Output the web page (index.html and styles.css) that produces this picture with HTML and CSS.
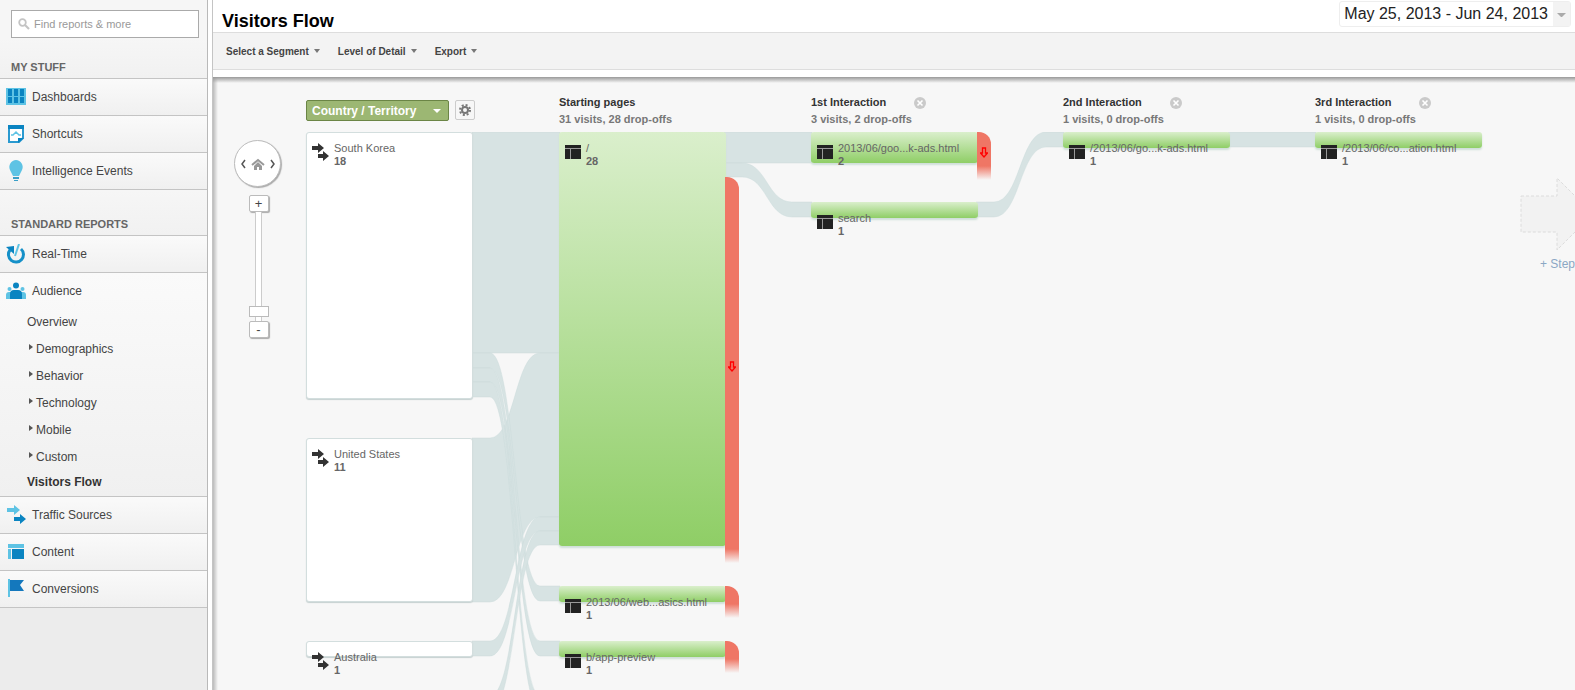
FILE: index.html
```
<!DOCTYPE html>
<html lang="en">
<head>
    <meta charset="utf-8">
    <title>Visitors Flow</title>
    <link rel="stylesheet" href="styles.css">
</head>
<body>
    <!-- shared icons -->
    <svg class="sprite" aria-hidden="true">
        <symbol id="page" viewBox="0 0 16 14">
            <path fill="#999" d="M0 0h16v14H0z"/>
            <path d="M0 0h16v3H0zM0 4h5v10H0zM6 4h10v10H6z"/>
        </symbol>
        <symbol id="arrows" viewBox="0 0 18 18">
            <path d="M0 3h6V0l6 5-6 5V7H0zM6 11h5V8l6 5-6 5v-3H6z"/>
        </symbol>
        <symbol id="close" viewBox="0 0 12 12">
            <circle cx="6" cy="6" r="6" fill="#cacaca"/>
            <path d="M3.5 3.5l5 5M8.5 3.5l-5 5" stroke="#fff" stroke-width="1.6"/>
        </symbol>
        <symbol id="drop" viewBox="0 0 8 11">
            <path d="M2.5 1h3v5h2L4 10 .5 6h2z" fill="none" stroke="#f00" stroke-width="1.3"/>
        </symbol>
    </svg>

    <div class="app">
        <nav class="sidebar">
            <div class="search">
                <svg width="12" height="12" viewBox="0 0 12 12"><circle cx="4.500" cy="4.500" r="3.300" fill="none" stroke="#c4c4c4" stroke-width="1.800"/><path d="M7 7l4 4" stroke="#c4c4c4" stroke-width="2.200"/></svg>
                <input type="text" aria-label="Find reports" placeholder="Find reports &amp; more">
            </div>

            <h2 class="section">MY STUFF</h2>
            <a class="item" href="#">
                <svg width="20" height="20" viewBox="0 0 20 20"><path fill="#5ec3e4" d="M0 1h20v17H0z"/><path fill="#0a84c1" d="M2 2h4v7H2zM8 2h4v7H8zM14 2h4v7h-4zM2 10h4v6H2zM8 10h4v6H8zM14 10h4v6h-4z"/></svg>
                Dashboards
            </a>
            <a class="item" href="#">
                <svg width="20" height="20" viewBox="0 0 20 20"><path fill="#fff" stroke="#2a9ad0" stroke-width="2" d="M3 3h14v11l-4 4H3z"/><path fill="#0a84c1" d="M2 1h16v4H2zM12 19v-5h6z"/><path fill="none" stroke="#5ec3e4" stroke-width="1.500" d="M5 11h2l3-3 3 3h2"/></svg>
                Shortcuts
            </a>
            <a class="item" href="#">
                <svg width="20" height="22" viewBox="0 0 20 22"><path fill="#5ec3e4" d="M10 0a7 7 0 0 1 6 10l-3 6H7l-3-6a7 7 0 0 1 6-10z"/><path fill="#3a9fc8" d="M7 17h6v2H7zM8 20h4v1H8z"/></svg>
                Intelligence Events
            </a>

            <h2 class="section standard">STANDARD REPORTS</h2>
            <a class="item" href="#">
                <svg width="20" height="20" viewBox="0 0 20 20"><path fill="none" stroke="#1590c8" stroke-width="3" d="M15 5a7.500 7.500 0 1 1-11 1"/><path fill="#0a84c1" d="M0 3l8-1v8z"/><path stroke="#5ec3e4" stroke-width="2" d="M9 12l4-12"/></svg>
                Real-Time
            </a>
            <div class="group">
                <a class="item" href="#">
                    <svg width="20" height="20" viewBox="0 0 20 20"><g fill="#5ec3e4"><circle cx="3.500" cy="8" r="2"/><circle cx="16.500" cy="8" r="2"/><path d="M0 18v-4q0-3 3-3h14q3 0 3 3v4z"/></g><g fill="#0a84c1"><circle cx="10" cy="4.500" r="3"/><path d="M4 18v-5q0-4 4-4h4q4 0 4 4v5z"/></g></svg>
                    Audience
                </a>
                <ul>
                    <li><a href="#">Overview</a></li>
                    <li class="closed"><a href="#">Demographics</a></li>
                    <li class="closed"><a href="#">Behavior</a></li>
                    <li class="closed"><a href="#">Technology</a></li>
                    <li class="closed"><a href="#">Mobile</a></li>
                    <li class="closed"><a href="#">Custom</a></li>
                    <li class="current"><a href="#">Visitors Flow</a></li>
                </ul>
            </div>
            <a class="item" href="#">
                <svg width="20" height="20" viewBox="0 0 20 20"><path fill="#5ec3e4" d="M1 3h7V0l6 5-6 5V7H1z"/><path fill="#0a84c1" d="M8 12h6V9l6 5-6 5v-3H8z"/></svg>
                Traffic Sources
            </a>
            <a class="item" href="#">
                <svg width="20" height="20" viewBox="0 0 20 20"><path fill="#5ec3e4" d="M2 2h16v4H2zM2 7h3v10H2z"/><path fill="#0a84c1" d="M6 7h12v10H6z"/></svg>
                Content
            </a>
            <a class="item" href="#">
                <svg width="20" height="20" viewBox="0 0 20 20"><path fill="#5ec3e4" d="M2 0h2v18H2z"/><path fill="#1478bd" d="M4 1h14l-4 5 4 6H4z"/></svg>
                Conversions
            </a>
        </nav>

        <main class="report">
            <header class="title-bar">
                <h1>Visitors Flow</h1>
                <button class="date"><span>May 25, 2013 - Jun 24, 2013</span><i></i></button>
            </header>
            <div class="toolbar">
                <button>Select a Segment</button>
                <button>Level of Detail</button>
                <button>Export</button>
            </div>

            <section class="canvas">
                <div class="controls">
                    <div class="pan">
                        <button aria-label="Back"><svg width="6" height="10" viewBox="0 0 6 10"><path d="M5 1L2 5l3 4" fill="none" stroke="#555" stroke-width="1.500"/></svg></button>
                        <button aria-label="Home"><svg width="14" height="12" viewBox="0 0 14 12"><path d="M1 7l6-5 6 5" fill="none" stroke="#999" stroke-width="2"/><path d="M3 8l4-4 4 4v4H8V9H6v3H3z" fill="#999"/></svg></button>
                        <button aria-label="Forward"><svg width="6" height="10" viewBox="0 0 6 10"><path d="M1 1l3 4-3 4" fill="none" stroke="#555" stroke-width="1.500"/></svg></button>
                    </div>
                    <button class="zoom">+</button>
                    <input type="range" aria-label="Zoom" min="0" max="100" value="4">
                    <button class="zoom">-</button>
                </div>

                <div class="flow">
                    <div class="steps">
                        <div class="step dimension">
                            <label class="picker">
                                <select aria-label="Dimension"><option>Country / Territory</option></select>
                            </label>
                            <button class="gear" aria-label="Settings">
                                <svg width="12" height="12" viewBox="0 0 12 12"><circle cx="6" cy="6" r="3" fill="none" stroke="#777" stroke-width="2"/><circle cx="6" cy="6" r="5" fill="none" stroke="#777" stroke-width="2" stroke-dasharray="2 1.927"/></svg>
                            </button>
                        </div>
                        <div class="step">
                            <h3>Starting pages</h3>
                            <p>31 visits, 28 drop-offs</p>
                        </div>
                        <div class="step">
                            <h3>1st Interaction <button aria-label="Remove step"><svg width="12" height="12"><use href="#close"/></svg></button></h3>
                            <p>3 visits, 2 drop-offs</p>
                        </div>
                        <div class="step">
                            <h3>2nd Interaction <button aria-label="Remove step"><svg width="12" height="12"><use href="#close"/></svg></button></h3>
                            <p>1 visits, 0 drop-offs</p>
                        </div>
                        <div class="step">
                            <h3>3rd Interaction <button aria-label="Remove step"><svg width="12" height="12"><use href="#close"/></svg></button></h3>
                            <p>1 visits, 0 drop-offs</p>
                        </div>
                    </div>

                    <div class="diagram">
                        <svg class="links" width="1200" height="640">
                            <path d="M166 0H254V221H166z"/>
                            <path d="M166 306H184C209 306 209 221 234 221H254V385H234C209 385 209 470 184 470H166z"/>
                            <path d="M166 221H184C209 221 209 454 234 454H254V469H234C209 469 209 236 184 236H166z"/>
                            <path d="M166 236H184C209 236 209 509 234 509H254V524H234C209 524 209 250 184 250H166z"/>
                            <path d="M166 250H184C209 250 209 564 234 564H254V579H234C209 579 209 265 184 265H166z"/>
                            <path d="M166 509H184C209 509 209 385 234 385H254V399H234C209 399 209 524 184 524H166z"/>
                            <path d="M166 564H184C209 564 209 399 234 399H254V413H234C209 413 209 579 184 579H166z"/>
                            <path d="M418 0H506V31H418z"/>
                            <path d="M418 31H436C461 31 461 70 486 70H506V85H486C461 85 461 45 436 45H418z"/>
                            <path d="M670 70H688C714 70 714 0 740 0H758V15H740C714 15 714 85 688 85H670z"/>
                            <path d="M922 0H1010V15H922z"/>
                        </svg>

                        <div class="node source korea"><svg width="18" height="18"><use href="#arrows"/></svg><p>South Korea <b>18</b></p></div>
                        <div class="node source states"><svg width="18" height="18"><use href="#arrows"/></svg><p>United States <b>11</b></p></div>
                        <div class="node source australia"><svg width="18" height="18"><use href="#arrows"/></svg><p>Australia <b>1</b></p></div>

                        <div class="node start root"><svg width="16" height="14"><use href="#page"/></svg><p>/ <b>28</b></p></div>
                        <div class="node start basics"><svg width="16" height="14"><use href="#page"/></svg><p>2013/06/web...asics.html <b>1</b></p></div>
                        <div class="node start preview"><svg width="16" height="14"><use href="#page"/></svg><p>b/app-preview <b>1</b></p></div>

                        <div class="node first ads"><svg width="16" height="14"><use href="#page"/></svg><p>2013/06/goo...k-ads.html <b>2</b></p></div>
                        <div class="node first find"><svg width="16" height="14"><use href="#page"/></svg><p>search <b>1</b></p></div>
                        <div class="node second"><svg width="16" height="14"><use href="#page"/></svg><p>/2013/06/go...k-ads.html <b>1</b></p></div>
                        <div class="node third"><svg width="16" height="14"><use href="#page"/></svg><p>/2013/06/co...ation.html <b>1</b></p></div>

                        <div class="drop drop-root"><svg width="8" height="11"><use href="#drop"/></svg></div>
                        <div class="drop drop-basics"></div>
                        <div class="drop drop-preview"></div>
                        <div class="drop drop-ads"><svg width="8" height="11"><use href="#drop"/></svg></div>
                    </div>
                </div>

                <a class="add-step" href="#">
                    <svg width="76" height="74" viewBox="0 0 76 74"><path d="M1 19h36V1l36 36-36 36V55H1z" fill="#f2f2f2" stroke="#dcdcdc" stroke-dasharray="3 2"/></svg>
                    <span>+ Step</span>
                </a>
            </section>
        </main>
    </div>
</body>
</html>
```

FILE: styles.css
```
* {
    margin: 0;
    padding: 0;
    box-sizing: border-box;
}

body {
    font-family: "Liberation Sans", Arial, sans-serif;
    font-size: 12px;
    color: #444;
    background: #fff;
}

button {
    border: none;
    background: none;
    font-family: inherit;
    color: inherit;
    cursor: pointer;
}

a {
    color: inherit;
    text-decoration: none;
}

svg {
    display: block;
    flex: none;
}

.sprite {
    position: absolute;
    width: 0;
    height: 0;
}

.app {
    display: flex;
    height: 100vh;
    overflow: hidden;
}

/* sidebar */
.sidebar {
    width: 208px;
    flex: none;
    background: #ececec;
    border-right: 1px solid #b9b9b9;
}

.search {
    display: flex;
    align-items: center;
    padding: 10px 8px 0 11px;
    height: 38px;
    background: #f6f6f6;
}

.search svg {
    position: absolute;
    left: 18px;
}

.search input {
    width: 100%;
    height: 28px;
    padding-left: 22px;
    border: 1px solid #aaa;
    background: #fff;
    font-family: inherit;
    font-size: 11px;
}

.search input::placeholder {
    color: #999;
}

.section {
    height: 40px;
    padding: 20px 0 0 11px;
    font-size: 11px;
    line-height: 18px;
    color: #666;
    background: linear-gradient(#f6f6f6, #f1f1f1);
}

.standard {
    height: 46px;
    padding-top: 25px;
    border-top: 1px solid #c4c4c4;
}

.item {
    display: flex;
    align-items: center;
    gap: 6px;
    height: 37px;
    padding-left: 6px;
    border-top: 1px solid #c4c4c4;
    background: linear-gradient(#fafafa, #f0f0f0);
}

.sidebar > .item:last-child {
    height: 38px;
    border-bottom: 1px solid #c4c4c4;
}

.group {
    border-top: 1px solid #c4c4c4;
    background: linear-gradient(#fafafa, #f0f0f0);
}

.group .item {
    height: 36px;
    border: none;
    background: none;
}

.group ul {
    list-style: none;
    padding-left: 27px;
}

.group li {
    display: flex;
    height: 27px;
    line-height: 27px;
}

.group .closed::before {
    content: "";
    width: 0;
    height: 0;
    margin: 8px 3px 0 2px;
    border: 3px solid transparent;
    border-left-color: #555;
    border-right: none;
    border-left-width: 4px;
}

.group .current {
    height: 25px;
    line-height: 22px;
    font-weight: bold;
    color: #333;
}

/* report header */
.report {
    flex: 1;
    min-width: 0;
    display: flex;
    flex-direction: column;
    margin-left: 4px;
    border-left: 1px solid #c4c4c4;
}

.title-bar {
    display: flex;
    justify-content: space-between;
    height: 32px;
    padding: 1px 4px 0 9px;
}

h1 {
    padding-top: 9px;
    font-size: 18px;
    line-height: 22px;
    color: #000;
}

.date {
    display: flex;
    height: 26px;
    border: 1px solid #eee;
    border-radius: 3px;
    font-size: 16px;
    line-height: 24px;
    color: #222;
}

.date span {
    padding: 0 5px 0 4px;
}

.date i {
    width: 17px;
    height: 24px;
    padding: 11px 4px;
    background: #f3f3f3;
}

.date i::before,
.toolbar button::after,
.picker::after {
    content: "";
    display: block;
    border: 4px solid transparent;
    border-top-color: #aaa;
    border-bottom: none;
}

.toolbar {
    display: flex;
    gap: 18px;
    height: 38px;
    padding-left: 13px;
    border-top: 1px solid #ddd;
    border-bottom: 1px solid #ddd;
    background: #f3f3f3;
}

.toolbar button {
    display: flex;
    align-items: center;
    gap: 5px;
    font-size: 10px;
    font-weight: bold;
}

.toolbar button::after {
    border-width: 4px 3px 0;
    border-top-color: #777;
}

/* flow canvas */
.canvas {
    position: relative;
    flex: 1;
    display: flex;
    margin-top: 7px;
    overflow: hidden;
    background:
        linear-gradient(#999, transparent) top / 100% 6px no-repeat,
        linear-gradient(to right, #bbb, transparent) left / 5px 100% no-repeat,
        #f7f7f7;
}

.controls {
    display: flex;
    flex-direction: column;
    align-items: center;
    width: 93px;
    flex: none;
    padding: 63px 2px 0 0;
}

.pan {
    display: flex;
    align-items: center;
    justify-content: center;
    gap: 5px;
    width: 47px;
    height: 47px;
    margin: 0 2px 8px 0;
    border: 1px solid #bbb;
    border-radius: 50%;
    background: #fff;
    box-shadow: 1px 1px 1px #aaa;
}

.zoom {
    width: 20px;
    height: 17px;
    border: 1px solid #bbb;
    border-radius: 2px;
    background: #fff;
    box-shadow: 1px 1px 1px #aaa;
    font-size: 13px;
    line-height: 14px;
}

.controls input {
    appearance: none;
    writing-mode: vertical-lr;
    direction: rtl;
    width: 20px;
    height: 109px;
    background: none;
}

.controls input::-webkit-slider-runnable-track {
    width: 7px;
    border: 1px solid #ccc;
    border-width: 0 1px;
    background: #fff;
}

.controls input::-webkit-slider-thumb {
    appearance: none;
    width: 20px;
    height: 11px;
    margin-left: -7px;
    border: 1px solid #bbb;
    background: #fff;
}

.flow {
    flex: none;
}

.steps {
    display: flex;
    height: 55px;
    padding-top: 17px;
}

.step {
    width: 252px;
    padding-left: 1px;
    font-size: 11px;
    font-weight: bold;
    line-height: 17px;
    color: #777;
}

.step h3 {
    display: flex;
    align-items: center;
    gap: 28px;
    font-size: 11px;
    color: #333;
}

.dimension {
    display: flex;
    gap: 6px;
    padding: 6px 0 0;
}

.picker {
    position: relative;
    width: 143px;
    height: 21px;
}

.picker select {
    appearance: none;
    width: 100%;
    height: 21px;
    padding-left: 5px;
    border: 1px solid #6b8546;
    border-radius: 2px;
    background: #9cb773;
    font-family: inherit;
    font-size: 12px;
    font-weight: bold;
    color: #fff;
}

.picker::after {
    position: absolute;
    top: 9px;
    right: 8px;
    border-top-color: #fff;
}

.gear {
    display: flex;
    align-items: center;
    justify-content: center;
    width: 20px;
    height: 20px;
    border: 1px solid #ccc;
    border-radius: 2px;
}

.diagram {
    position: relative;
    height: 558px;
}

.links {
    position: absolute;
    top: 0;
    left: 0;
    fill: #d7e3e3;
    stroke: #c8dada;
    stroke-opacity: 0.4;
}

.node {
    position: absolute;
    display: flex;
    width: 167px;
    height: 16px;
    padding: 10px 0 0 6px;
    border-radius: 3px;
    font-size: 11px;
    line-height: 13px;
    color: #666;
    background: linear-gradient(#daefcc, #8fce66);
    box-shadow: 0 2px 2px #cfdfd8;
}

.node svg {
    margin: 3px 5px 0 0;
    fill: #222;
}

.node b {
    display: block;
}

.node p {
    white-space: nowrap;
}

.source {
    left: 0;
    padding: 9px 0 0 5px;
    border: 1px solid #d3dede;
    background: #fff;
    box-shadow: 0 1px 1px #c5d0d0;
}

.source svg {
    margin: 1px 4px 0 0;
    fill: #333;
}

.start {
    left: 253px;
}

.first {
    left: 505px;
}

.second {
    left: 757px;
}

.third {
    left: 1009px;
}

.korea {
    height: 267px;
}

.states {
    top: 306px;
    height: 164px;
}

.australia {
    top: 509px;
}

.root {
    height: 414px;
}

.basics {
    top: 454px;
}

.preview {
    top: 509px;
}

.ads {
    height: 31px;
}

.find {
    top: 70px;
}

.drop {
    position: absolute;
    left: 419px;
    display: flex;
    align-items: center;
    justify-content: center;
    width: 14px;
    height: 32px;
    border-top-right-radius: 12px;
    background: linear-gradient(to top, transparent, #ef7665 14px);
}

.drop-root {
    top: 45px;
    height: 386px;
}

.drop-root svg {
    margin-bottom: 8px;
}

.drop-basics {
    top: 454px;
}

.drop-preview {
    top: 509px;
}

.drop-ads {
    left: 671px;
    height: 48px;
    padding-bottom: 8px;
}

.add-step {
    position: absolute;
    top: 100px;
    right: -21px;
    color: #8ba7c4;
}

.add-step span {
    display: block;
    padding: 6px 0 0 20px;
}
```
